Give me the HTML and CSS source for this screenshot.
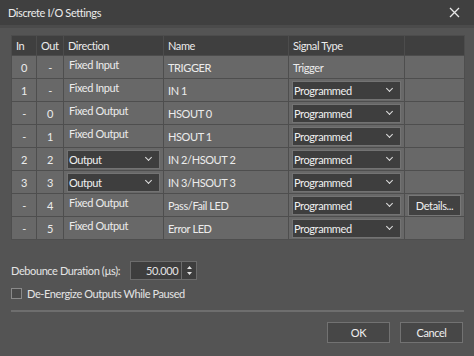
FILE: index.html
```html
<!DOCTYPE html>
<html lang="en">
<head>
  <meta charset="UTF-8">
  <title>Discrete I/O Settings</title>
  <link rel="stylesheet" href="styles.css">
</head>
<body>

  <div class="dialog">
    <!-- Title bar -->
    <div class="titlebar">
      <span class="title">Discrete I/O Settings</span>
      <svg class="close" width="11" height="11" viewBox="0 0 11 11">
        <path d="M1 1 L10 10 M10 1 L1 10" stroke="#e8e8e8" stroke-width="1.3" fill="none"/>
      </svg>
    </div>

    <div class="content">
      <table class="io-table">
        <colgroup>
          <col style="width:25px">
          <col style="width:27px">
          <col style="width:100px">
          <col style="width:125px">
          <col style="width:116px">
          <col style="width:60px">
        </colgroup>
        <thead>
          <tr>
            <th>In</th>
            <th>Out</th>
            <th>Direction</th>
            <th>Name</th>
            <th>Signal Type</th>
            <th></th>
          </tr>
        </thead>
        <tbody>
          <tr>
            <td class="num">0</td><td class="num">-</td>
            <td class="dir">Fixed Input</td>
            <td>TRIGGER</td>
            <td class="sig">Trigger</td>
            <td></td>
          </tr>
          <tr>
            <td class="num">1</td><td class="num">-</td>
            <td class="dir">Fixed Input</td>
            <td>IN 1</td>
            <td class="sel"><div class="combo">Programmed<span class="chev"></span></div></td>
            <td></td>
          </tr>
          <tr>
            <td class="num">-</td><td class="num">0</td>
            <td class="dir">Fixed Output</td>
            <td>HSOUT 0</td>
            <td class="sel"><div class="combo">Programmed<span class="chev"></span></div></td>
            <td></td>
          </tr>
          <tr>
            <td class="num">-</td><td class="num">1</td>
            <td class="dir">Fixed Output</td>
            <td>HSOUT 1</td>
            <td class="sel"><div class="combo">Programmed<span class="chev"></span></div></td>
            <td></td>
          </tr>
          <tr>
            <td class="num">2</td><td class="num">2</td>
            <td class="sel"><div class="combo">Output<span class="chev"></span></div></td>
            <td>IN 2/HSOUT 2</td>
            <td class="sel"><div class="combo">Programmed<span class="chev"></span></div></td>
            <td></td>
          </tr>
          <tr>
            <td class="num">3</td><td class="num">3</td>
            <td class="sel"><div class="combo">Output<span class="chev"></span></div></td>
            <td>IN 3/HSOUT 3</td>
            <td class="sel"><div class="combo">Programmed<span class="chev"></span></div></td>
            <td></td>
          </tr>
          <tr>
            <td class="num">-</td><td class="num">4</td>
            <td class="dir">Fixed Output</td>
            <td>Pass/Fail LED</td>
            <td class="sel"><div class="combo">Programmed<span class="chev"></span></div></td>
            <td class="sel"><div class="details">Details...</div></td>
          </tr>
          <tr>
            <td class="num">-</td><td class="num">5</td>
            <td class="dir">Fixed Output</td>
            <td>Error LED</td>
            <td class="sel"><div class="combo">Programmed<span class="chev"></span></div></td>
            <td></td>
          </tr>
        </tbody>
      </table>

      <div class="debounce">
        <span>Debounce Duration (µs):</span>
        <div class="spin">
          <span class="spin-value">50.000</span>
          <span class="spin-arrows">
            <svg width="7" height="13" viewBox="0 0 7 13">
              <path d="M3.5 2 L6 5 L1 5 Z M3.5 11 L6 8 L1 8 Z" fill="#e0e0e0"/>
            </svg>
          </span>
        </div>
      </div>

      <label class="check-row">
        <span class="checkbox"></span>
        De-Energize Outputs While Paused
      </label>

      <div class="separator"></div>

      <div class="buttons">
        <div class="btn">OK</div>
        <div class="btn">Cancel</div>
      </div>
    </div>
  </div>

</body>
</html>
```

FILE: styles.css
```css
body {
  margin: 0;
  background-color: #545454;
  font-family: Lato, 'Noto Sans', sans-serif;
  font-size: 11px;
  letter-spacing: -0.4px;
  color: #e4e4e4;
}

.dialog {
  width: 474px;
  height: 356px;
  background-color: #545454;
}

.titlebar {
  height: 25px;
  background-color: #404040;
  border-bottom: 3px solid #4b4b4b;
  display: flex;
  align-items: center;
  justify-content: space-between;
  padding: 0 14px 0 8px;
}

.title {
  font-size: 11px;
  color: #ececec;
}

.content {
  padding: 7px 10px 0 11px;
}

.io-table {
  border-collapse: collapse;
  table-layout: fixed;
  width: 453px;
  border: 1px solid #454545;
}

.io-table th {
  height: 19px;
  background-color: #3f3f3f;
  text-align: left;
  font-weight: normal;
  padding: 0 0 0 4px;
  border: 1px solid #4c4c4c;
  color: #ececec;
}

.io-table td {
  height: 22px;
  background-color: #686868;
  padding: 0 0 0 4px;
  border: 1px solid #4e4e4e;
  white-space: nowrap;
  color: #ececec;
}

.io-table td.num {
  text-align: center;
  padding: 0;
}

.io-table td.dir {
  padding-left: 5px;
  vertical-align: top;
  padding-top: 2px;
  height: 20px;
}

.io-table td.sel {
  padding: 0 3px 0 3px;
}

.combo {
  height: 17px;
  background-color: #3e3e3e;
  border: 1px solid #737373;
  display: flex;
  align-items: center;
  justify-content: space-between;
  padding: 0 8px 0 1px;
  color: #f0f0f0;
}

.chev {
  width: 4px;
  height: 4px;
  border-right: 1.2px solid #e0e0e0;
  border-bottom: 1.2px solid #e0e0e0;
  transform: rotate(45deg);
  margin-top: -3px;
}

.details {
  height: 19px;
  background-color: #424242;
  border: 1px solid #777;
  display: flex;
  align-items: center;
  justify-content: center;
  color: #f0f0f0;
}

.debounce {
  display: flex;
  align-items: center;
  margin-top: 21px;
  gap: 10px;
}

.spin {
  display: flex;
  width: 65px;
  height: 17px;
  background-color: #3e3e3e;
  border: 1px solid #6c6c6c;
}

.spin-value {
  flex: 1;
  text-align: right;
  padding-right: 3px;
  line-height: 17px;
}

.spin-arrows {
  width: 14px;
  border-left: 1px solid #6c6c6c;
  display: flex;
  align-items: center;
  justify-content: center;
}

.check-row {
  display: flex;
  align-items: center;
  gap: 5px;
  margin-top: 7px;
}

.checkbox {
  width: 9px;
  height: 9px;
  border: 1px solid #8a8a8a;
  background-color: #4a4a4a;
}

.separator {
  height: 2px;
  width: 453px;
  background-color: #6e6e6e;
  margin-top: 10px;
}

.buttons {
  display: flex;
  justify-content: flex-end;
  gap: 10px;
  margin-top: 10px;
  padding-right: 1px;
}

.btn {
  width: 61px;
  height: 19px;
  background-color: #474747;
  border: 1px solid #727272;
  display: flex;
  align-items: center;
  justify-content: center;
  color: #f0f0f0;
}
```
